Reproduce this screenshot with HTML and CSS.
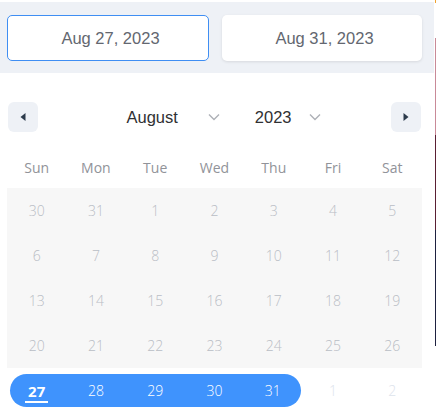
FILE: index.html
```html
<!DOCTYPE html>
<html lang="en">
<head>
<meta charset="utf-8">
<title>Date range picker</title>
<link rel="stylesheet" href="styles.css">
</head>
<body>
<div class="page">
  <div class="range-bar">
    <div class="date-input active">Aug 27, 2023</div>
    <div class="date-input">Aug 31, 2023</div>
  </div>

  <div class="calendar">
    <div class="nav">
      <button class="nav-btn" aria-label="Previous month">
        <svg width="8" height="10" viewBox="0 0 8 10"><path d="M6.5 1 L1.5 5 L6.5 9 Z" fill="#2c3a4b"/></svg>
      </button>
      <div class="selects">
        <span class="select-label">August</span>
        <svg class="chev chev-month" width="12" height="8" viewBox="0 0 12 8"><path d="M1 1.5 L6 6.5 L11 1.5" fill="none" stroke="#aeb1b7" stroke-width="1.4"/></svg>
        <span class="select-label year">2023</span>
        <svg class="chev chev-year" width="12" height="8" viewBox="0 0 12 8"><path d="M1 1.5 L6 6.5 L11 1.5" fill="none" stroke="#aeb1b7" stroke-width="1.4"/></svg>
      </div>
      <button class="nav-btn" aria-label="Next month">
        <svg width="8" height="10" viewBox="0 0 8 10"><path d="M1.5 1 L6.5 5 L1.5 9 Z" fill="#2c3a4b"/></svg>
      </button>
    </div>

    <div class="weekdays">
      <span>Sun</span><span>Mon</span><span>Tue</span><span>Wed</span><span>Thu</span><span>Fri</span><span>Sat</span>
    </div>

    <div class="days past">
      <span>30</span><span>31</span><span>1</span><span>2</span><span>3</span><span>4</span><span>5</span>
      <span>6</span><span>7</span><span>8</span><span>9</span><span>10</span><span>11</span><span>12</span>
      <span>13</span><span>14</span><span>15</span><span>16</span><span>17</span><span>18</span><span>19</span>
      <span>20</span><span>21</span><span>22</span><span>23</span><span>24</span><span>25</span><span>26</span>
    </div>

    <div class="days last-row">
      <span class="in-range start"><b class="today">27</b></span>
      <span class="in-range">28</span>
      <span class="in-range">29</span>
      <span class="in-range">30</span>
      <span class="in-range end">31</span>
      <span class="next">1</span>
      <span class="next">2</span>
    </div>
  </div>
  <div class="edge-strip"></div>
</div>
</body>
</html>
```

FILE: styles.css
```css
html, body {
  margin: 0;
  padding: 0;
  background: #ffffff;
}

.page {
  position: relative;
  width: 436px;
  height: 415px;
  padding-top: 2px;
  box-sizing: border-box;
  overflow: hidden;
}

.range-bar {
  width: 434px;
  box-sizing: border-box;
  background: #eef1f6;
  padding: 13px 12px 12px 7px;
  display: flex;
  gap: 13px;
}

.date-input {
  flex: 1;
  height: 46px;
  box-sizing: border-box;
  background: #ffffff;
  border-radius: 5px;
  display: flex;
  align-items: center;
  justify-content: center;
  padding-left: 5px;
  font-family: "Liberation Sans", Arial, sans-serif;
  font-size: 16.5px;
  color: #636770;
  box-shadow: 0 1px 3px rgba(0, 0, 0, 0.10);
}

.date-input.active {
  border: 1px solid #3f8ef3;
  box-shadow: none;
}

.calendar {
  width: 415px;
  margin-left: 7px;
}

.nav {
  margin-top: 29px;
  height: 30px;
  display: flex;
  align-items: center;
  padding: 0 1px;
}

.nav-btn {
  width: 30px;
  height: 30px;
  border: none;
  border-radius: 6px;
  background: #eef1f6;
  display: flex;
  align-items: center;
  justify-content: center;
  padding: 0;
}

.selects {
  flex: 1;
  display: flex;
  align-items: center;
  justify-content: center;
  padding-left: 18px;
  font-family: "Liberation Sans", Arial, sans-serif;
  font-size: 16.5px;
  color: #303133;
}

.chev-month { margin-left: 30px; }
.year { margin-left: 35px; }
.chev-year { margin-left: 17px; }

.weekdays {
  margin-top: 16px;
  height: 40px;
  display: grid;
  grid-template-columns: repeat(7, 1fr);
  font-family: "Open Sans", sans-serif;
  font-size: 14px;
  color: #919399;
}

.weekdays span {
  text-align: center;
  line-height: 40px;
}

.days {
  display: grid;
  grid-template-columns: repeat(7, 1fr);
  grid-auto-rows: 45px;
  font-family: "Open Sans", sans-serif;
  font-size: 14px;
  font-weight: 300;
}

.days span {
  display: flex;
  align-items: center;
  justify-content: center;
}

.past {
  background: #f7f7f7;
  color: #b9bdc5;
}

.last-row span {
  margin-top: 6px;
  height: 33px;
}

.in-range {
  background: #3f93fd;
  color: #ffffff;
  font-weight: 300;
}

.in-range.start {
  margin-left: 3px;
  border-radius: 17px 0 0 17px;
}

.in-range.end {
  margin-right: 2px;
  border-radius: 0 17px 17px 0;
}

.today {
  font-weight: 700;
  font-size: 15px;
  line-height: 15px;
  padding: 0 3px 2px;
  margin-left: -3px;
  border-bottom: 2px solid #ffffff;
  margin-top: 6px;
}

.next {
  color: #dde3ec;
}

.edge-strip {
  position: absolute;
  top: 0;
  right: 0;
  width: 1px;
  height: 346px;
  background: linear-gradient(#f0a22e 0 3px, #ffffff 3px 38px, #c98a98 38px 135px, #5a1f33 135px 230px, #1e2140 230px 346px);
}
```
